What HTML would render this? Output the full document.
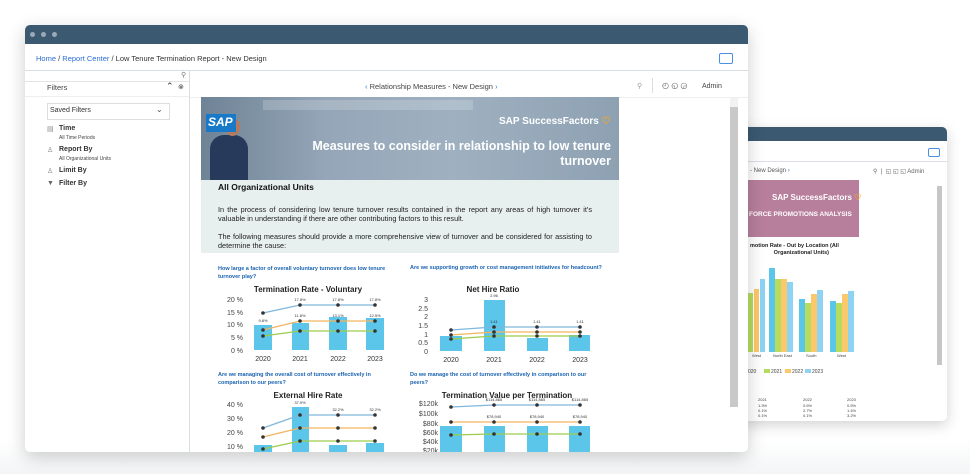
<!DOCTYPE html>
<html><head><meta charset="utf-8"><style>
*{margin:0;padding:0;box-sizing:border-box}
body{width:970px;height:474px;background:#fff;position:relative;overflow:hidden;font-family:"Liberation Sans",Arial,sans-serif;color:#333}
.a{position:absolute}
.t{position:absolute;white-space:nowrap}
</style></head><body>
<div class="a" style="left:0;top:440px;width:970px;height:34px;background:linear-gradient(#fff,#f3f5f6)"></div>
<!-- second window -->
<div class="a" style="left:740px;top:127px;width:207px;height:294px;background:#fff;border-radius:5px;box-shadow:0 4px 14px rgba(0,0,0,.18);overflow:hidden">
 <div class="a" style="left:0;top:0;width:207px;height:14px;background:#3b5a72"></div>
 <div class="a" style="left:0;top:34px;width:207px;height:1px;background:#dde"></div>
 <div class="a" style="left:188px;top:21px;width:12px;height:9px;border:1.5px solid #4a90e2;border-radius:2px"></div>
 <div class="t" style="left:10px;top:41px;font-size:6px;color:#555">- New Design <span style="color:#2a6fd6">›</span></div>
 <div class="t" style="left:133px;top:41px;font-size:6px;color:#666">⚲ &nbsp;|&nbsp; ◱ ◱ ◱ Admin</div>
 <div class="a" style="left:8px;top:53px;width:111px;height:57px;background:#b87f9c"></div>
 <div class="t" style="left:32px;top:66px;font-size:8px;font-weight:bold;color:#fff">SAP SuccessFactors <span style="color:#f5a623">♡</span></div>
 <div class="t" style="left:9px;top:84px;font-size:6.5px;font-weight:bold;color:#fff">FORCE PROMOTIONS ANALYSIS</div>
 <div class="t" style="left:10px;top:116px;font-size:5.5px;font-weight:bold;color:#222;text-align:center;line-height:7px">motion Rate - Out by Location (All<br>&nbsp;&nbsp;&nbsp;&nbsp;&nbsp;&nbsp;&nbsp;&nbsp;&nbsp;Organizational Units)</div>
 <svg class="a" style="left:0;top:0" width="207" height="294">
  <g>
   <rect x="8" y="166" width="5" height="59" fill="#b5dc5f"/><rect x="14" y="162" width="5" height="63" fill="#fbc96b"/><rect x="20" y="152" width="5" height="73" fill="#8fd3f4"/>
   <rect x="29" y="141" width="6" height="84" fill="#5bc5ea"/><rect x="35" y="152" width="6" height="73" fill="#b5dc5f"/><rect x="41" y="152" width="6" height="73" fill="#fbc96b"/><rect x="47" y="155" width="6" height="70" fill="#8fd3f4"/>
   <rect x="59" y="172" width="6" height="53" fill="#5bc5ea"/><rect x="65" y="176" width="6" height="49" fill="#b5dc5f"/><rect x="71" y="167" width="6" height="58" fill="#fbc96b"/><rect x="77" y="163" width="6" height="62" fill="#8fd3f4"/>
   <rect x="90" y="174" width="6" height="51" fill="#5bc5ea"/><rect x="96" y="176" width="6" height="49" fill="#b5dc5f"/><rect x="102" y="167" width="6" height="58" fill="#fbc96b"/><rect x="108" y="164" width="6" height="61" fill="#8fd3f4"/>
  </g>
  <g font-size="4" fill="#444" font-family="Liberation Sans">
   <text x="12" y="230">West</text><text x="33" y="230">North East</text><text x="66" y="230">South</text><text x="97" y="230">West</text>
   <rect x="24" y="242" width="6" height="4" fill="#b5dc5f"/><rect x="45" y="242" width="6" height="4" fill="#fbc96b"/><rect x="65" y="242" width="6" height="4" fill="#8fd3f4"/>
   <text x="8" y="246" font-size="5">020</text><text x="31" y="246" font-size="5">2021</text><text x="52" y="246" font-size="5">2022</text><text x="72" y="246" font-size="5">2023</text>
   <text x="18" y="274">2021</text><text x="63" y="274">2022</text><text x="107" y="274">2023</text>
   <text x="18" y="280">1.3%</text><text x="63" y="280">0.6%</text><text x="107" y="280">0.5%</text>
   <text x="18" y="285">0.1%</text><text x="63" y="285">2.7%</text><text x="107" y="285">1.4%</text>
   <text x="18" y="290">0.1%</text><text x="63" y="290">0.1%</text><text x="107" y="290">3.2%</text>
  </g>
  <rect x="197" y="59" width="5" height="179" fill="#c6c6c6"/>
 </svg>
</div>
<!-- main window -->
<div class="a" style="left:25px;top:25px;width:723px;height:427px;background:#fff;border-radius:5px;box-shadow:0 5px 18px rgba(0,0,0,.2);overflow:hidden">
 <div class="a" style="left:0;top:0;width:723px;height:19px;background:#3b5a72"></div>
 <div class="a" style="left:5px;top:7px;width:5px;height:5px;border-radius:50%;background:#9aaab8"></div>
 <div class="a" style="left:16px;top:7px;width:5px;height:5px;border-radius:50%;background:#9aaab8"></div>
 <div class="a" style="left:27px;top:7px;width:5px;height:5px;border-radius:50%;background:#9aaab8"></div>
 <div class="t" style="left:11px;top:29px;font-size:7.5px;color:#333"><span style="color:#2a6fd6">Home</span> / <span style="color:#2a6fd6">Report Center</span> / Low Tenure Termination Report - New Design</div>
 <div class="a" style="left:694px;top:28px;width:14px;height:11px;border:1.5px solid #4a90e2;border-radius:2px"></div>
 <div class="a" style="left:0;top:45px;width:723px;height:1px;background:#d8dde2"></div>
 <!-- left panel -->
 <div class="a" style="left:164px;top:45px;width:1px;height:382px;background:#d8dde2"></div>
 <div class="a" style="left:0;top:56px;width:164px;height:1px;background:#e4e4e4"></div>
 <div class="t" style="left:156px;top:46px;font-size:7px;color:#777">⚲</div>
 <div class="t" style="left:22px;top:58px;font-size:7.5px;color:#444">Filters</div>
 <div class="t" style="left:141px;top:56px;font-size:9px;color:#333">⌃</div>
 <div class="t" style="left:153px;top:58px;font-size:7px;color:#444">⊗</div>
 <div class="a" style="left:0;top:71px;width:164px;height:1px;background:#eee"></div>
 <div class="a" style="left:22px;top:78px;width:123px;height:17px;border:1px solid #ddd"></div>
 <div class="t" style="left:25px;top:82px;font-size:7px;color:#333">Saved Filters</div>
 <div class="t" style="left:131px;top:80px;font-size:8px;color:#555">⌄</div>
 <div class="t" style="left:22px;top:100px;font-size:7px;color:#888">▤</div>
 <div class="t" style="left:34px;top:100px;font-size:7px;font-weight:bold;color:#333">Time</div>
 <div class="t" style="left:34px;top:110px;font-size:5px;color:#444">All Time Periods</div>
 <div class="t" style="left:22px;top:121px;font-size:7px;color:#888">♙</div>
 <div class="t" style="left:34px;top:121px;font-size:7px;font-weight:bold;color:#333">Report By</div>
 <div class="t" style="left:34px;top:131px;font-size:5px;color:#444">All Organizational Units</div>
 <div class="t" style="left:22px;top:142px;font-size:7px;color:#888">♙</div>
 <div class="t" style="left:34px;top:142px;font-size:7px;font-weight:bold;color:#333">Limit By</div>
 <div class="t" style="left:22px;top:155px;font-size:7px;color:#666">▼</div>
 <div class="t" style="left:34px;top:155px;font-size:7px;font-weight:bold;color:#333">Filter By</div>
 <!-- header -->
 <div class="a" style="left:165px;top:72px;width:558px;height:1px;background:#eee"></div>
 <div class="t" style="left:340px;top:57px;font-size:7.5px;color:#444"><span style="color:#2a6fd6">‹</span> Relationship Measures - New Design <span style="color:#2a6fd6">›</span></div>
 <div class="t" style="left:612px;top:57px;font-size:7px;color:#999">⚲</div>
 <div class="a" style="left:627px;top:53px;width:1px;height:15px;background:#ddd"></div>
 <div class="t" style="left:637px;top:56px;font-size:8px;color:#666">◴ ◵ ◶</div>
 <div class="t" style="left:677px;top:58px;font-size:7px;color:#444">Admin</div>
 <div class="a" style="left:705px;top:82px;width:8px;height:300px;background:#c9c9c9"></div>
 <div class="a" style="left:705px;top:73px;width:8px;height:9px;background:#f2f2f2"></div>
 <!-- banner -->
 <div class="a" style="left:176px;top:72px;width:418px;height:83px;background:linear-gradient(90deg,#6f8396 0%,#94a6b7 30%,#9fb1c1 60%,#8ea1b2 100%)"></div>
 <div class="a" style="left:238px;top:75px;width:210px;height:10px;background:rgba(255,255,255,.18)"></div>
 <div class="a" style="left:185px;top:110px;width:38px;height:45px;background:#283a5c;border-radius:14px 14px 0 0"></div>
 <div class="a" style="left:200px;top:93px;width:15px;height:18px;background:#b27a5e;border-radius:50%"></div>
 <div class="a" style="left:181px;top:89px;width:30px;height:18px;background:#1779c7"></div>
 <div class="t" style="left:183px;top:90px;font-size:12px;font-weight:bold;color:#fff;font-style:italic">SAP</div>
 <div class="t" style="left:474px;top:91px;font-size:10px;font-weight:bold;color:#fff">SAP SuccessFactors <span style="color:#f5a623">♡</span></div>
 <div class="t" style="left:266px;top:114px;font-size:12.5px;font-weight:bold;color:#fff;text-align:right;line-height:15px;width:320px">Measures to consider in relationship to low tenure<br>turnover</div>
 <div class="a" style="left:176px;top:155px;width:418px;height:73px;background:#e8efef"></div>
 <div class="t" style="left:193px;top:157px;font-size:8.5px;font-weight:bold;color:#111">All Organizational Units</div>
 <div class="a" style="left:193px;top:180px;width:374px;font-size:7.3px;line-height:9px;color:#222;text-align:justify">In the process of considering low tenure turnover results contained in the report any areas of high turnover it's valuable in understanding if there are other contributing factors to this result.<br><br>The following measures should provide a more comprehensive view of turnover and be considered for assisting to determine the cause:</div>
 <div class="a" style="left:193px;top:240px;width:190px;font-size:5.5px;line-height:8px;color:#1a63b0;font-weight:bold">How large a factor of overall voluntary turnover does low tenure turnover play?</div>
 <div class="t" style="left:385px;top:240px;font-size:5.5px;color:#1a63b0;font-weight:bold">Are we supporting growth or cost management initiatives for headcount?</div>
 <div class="a" style="left:193px;top:346px;width:160px;font-size:5.5px;line-height:8px;color:#1a63b0;font-weight:bold">Are we managing the overall cost of turnover effectively in comparison to our peers?</div>
 <div class="a" style="left:385px;top:346px;width:185px;font-size:5.5px;line-height:8px;color:#1a63b0;font-weight:bold">Do we manage the cost of turnover effectively in comparison to our peers?</div>
</div>
<!-- charts in page coords -->
<svg class="a" style="left:0;top:0" width="970" height="452" font-family="Liberation Sans">
 <defs><clipPath id="c"><rect x="25" y="25" width="723" height="427"/></clipPath></defs>
 <g clip-path="url(#c)">
 <text x="308" y="292" font-size="8" font-weight="bold" text-anchor="middle" fill="#222">Termination Rate - Voluntary</text>
 <g font-size="7" fill="#444" text-anchor="end"><text x="243" y="302">20 %</text><text x="243" y="315">15 %</text><text x="243" y="327">10 %</text><text x="243" y="340">5 %</text><text x="243" y="353">0 %</text></g>
 <g fill="#5bc5ea"><rect x="254" y="325" width="18" height="25"/><rect x="292" y="323" width="17" height="27"/><rect x="329" y="317" width="18" height="33"/><rect x="366" y="318" width="18" height="32"/></g>
 <polyline points="263,313 300,305 338,305 375,305" fill="none" stroke="#7fb7dc" stroke-width="1.3"/>
 <polyline points="263,330 300,321 338,321 375,321" fill="none" stroke="#f2b45f" stroke-width="1.3"/>
 <polyline points="263,336 300,331 338,331 375,331" fill="none" stroke="#9ccc4a" stroke-width="1.3"/>
 <g font-size="7" fill="#333" text-anchor="middle"><text x="263" y="361">2020</text><text x="300" y="361">2021</text><text x="338" y="361">2022</text><text x="375" y="361">2023</text></g>
 <text x="493" y="292" font-size="8" font-weight="bold" text-anchor="middle" fill="#222">Net Hire Ratio</text>
 <g font-size="7" fill="#444" text-anchor="end"><text x="428" y="302">3</text><text x="428" y="311">2.5</text><text x="428" y="319">2</text><text x="428" y="328">1.5</text><text x="428" y="337">1</text><text x="428" y="345">0.5</text><text x="428" y="354">0</text></g>
 <g fill="#5bc5ea"><rect x="440" y="336" width="22" height="15"/><rect x="484" y="300" width="21" height="51"/><rect x="527" y="338" width="21" height="13"/><rect x="569" y="335" width="21" height="16"/></g>
 <polyline points="451,330 494,327 537,327 580,327" fill="none" stroke="#7fb7dc" stroke-width="1.3"/>
 <polyline points="451,335 494,332 537,332 580,332" fill="none" stroke="#f2b45f" stroke-width="1.3"/>
 <polyline points="451,339 494,336 537,336 580,336" fill="none" stroke="#9ccc4a" stroke-width="1.3"/>
 <g font-size="7" fill="#333" text-anchor="middle"><text x="451" y="362">2020</text><text x="494" y="362">2021</text><text x="537" y="362">2022</text><text x="580" y="362">2023</text></g>
 <text x="308" y="398" font-size="8" font-weight="bold" text-anchor="middle" fill="#222">External Hire Rate</text>
 <g font-size="7" fill="#444" text-anchor="end"><text x="243" y="407">40 %</text><text x="243" y="421">30 %</text><text x="243" y="435">20 %</text><text x="243" y="449">10 %</text></g>
 <g fill="#5bc5ea"><rect x="254" y="445" width="18" height="20"/><rect x="292" y="407" width="17" height="50"/><rect x="329" y="445" width="18" height="20"/><rect x="366" y="443" width="18" height="20"/></g>
 <polyline points="263,428 300,415 338,415 375,415" fill="none" stroke="#7fb7dc" stroke-width="1.3"/>
 <polyline points="263,437 300,428 338,428 375,428" fill="none" stroke="#f2b45f" stroke-width="1.3"/>
 <polyline points="263,449 300,441 338,441 375,441" fill="none" stroke="#9ccc4a" stroke-width="1.3"/>
 <text x="507" y="398" font-size="8" font-weight="bold" text-anchor="middle" fill="#222">Termination Value per Termination</text>
 <g font-size="7" fill="#444" text-anchor="end"><text x="438" y="406">$120k</text><text x="438" y="416">$100k</text><text x="438" y="426">$80k</text><text x="438" y="435">$60k</text><text x="438" y="444">$40k</text><text x="438" y="453">$20k</text></g>
 <g fill="#5bc5ea"><rect x="440" y="426" width="22" height="30"/><rect x="484" y="426" width="21" height="30"/><rect x="527" y="426" width="21" height="30"/><rect x="569" y="426" width="21" height="30"/></g>
 <polyline points="451,407 494,405 537,405 580,405" fill="none" stroke="#7fb7dc" stroke-width="1.3"/>
 <polyline points="451,422 494,422 537,422 580,422" fill="none" stroke="#f2b45f" stroke-width="1.3"/>
 <polyline points="451,435 494,434 537,434 580,434" fill="none" stroke="#9ccc4a" stroke-width="1.3"/>
 <g fill="#333">
  <circle cx="263" cy="313" r="1.8"/><circle cx="300" cy="305" r="1.8"/><circle cx="338" cy="305" r="1.8"/><circle cx="375" cy="305" r="1.8"/>
  <circle cx="263" cy="330" r="1.8"/><circle cx="300" cy="321" r="1.8"/><circle cx="338" cy="321" r="1.8"/><circle cx="375" cy="321" r="1.8"/>
  <circle cx="263" cy="336" r="1.8"/><circle cx="300" cy="331" r="1.8"/><circle cx="338" cy="331" r="1.8"/><circle cx="375" cy="331" r="1.8"/>
  <circle cx="451" cy="330" r="1.8"/><circle cx="494" cy="327" r="1.8"/><circle cx="537" cy="327" r="1.8"/><circle cx="580" cy="327" r="1.8"/>
  <circle cx="451" cy="335" r="1.8"/><circle cx="494" cy="332" r="1.8"/><circle cx="537" cy="332" r="1.8"/><circle cx="580" cy="332" r="1.8"/>
  <circle cx="451" cy="339" r="1.8"/><circle cx="494" cy="336" r="1.8"/><circle cx="537" cy="336" r="1.8"/><circle cx="580" cy="336" r="1.8"/>
  <circle cx="263" cy="428" r="1.8"/><circle cx="300" cy="415" r="1.8"/><circle cx="338" cy="415" r="1.8"/><circle cx="375" cy="415" r="1.8"/>
  <circle cx="263" cy="437" r="1.8"/><circle cx="300" cy="428" r="1.8"/><circle cx="338" cy="428" r="1.8"/><circle cx="375" cy="428" r="1.8"/>
  <circle cx="263" cy="449" r="1.8"/><circle cx="300" cy="441" r="1.8"/><circle cx="338" cy="441" r="1.8"/><circle cx="375" cy="441" r="1.8"/>
  <circle cx="451" cy="407" r="1.8"/><circle cx="494" cy="405" r="1.8"/><circle cx="537" cy="405" r="1.8"/><circle cx="580" cy="405" r="1.8"/>
  <circle cx="451" cy="422" r="1.8"/><circle cx="494" cy="422" r="1.8"/><circle cx="537" cy="422" r="1.8"/><circle cx="580" cy="422" r="1.8"/>
  <circle cx="451" cy="435" r="1.8"/><circle cx="494" cy="434" r="1.8"/><circle cx="537" cy="434" r="1.8"/><circle cx="580" cy="434" r="1.8"/>
 </g>
 <g font-size="4" fill="#333" text-anchor="middle">
  <text x="300" y="301">17.8%</text><text x="338" y="301">17.8%</text><text x="375" y="301">17.8%</text>
  <text x="300" y="317">11.8%</text><text x="338" y="317">13.1%</text><text x="375" y="317">12.5%</text><text x="263" y="322">9.8%</text>
  <text x="494" y="297">2.96</text><text x="494" y="323">1.41</text><text x="537" y="323">1.41</text><text x="580" y="323">1.41</text>
  <text x="300" y="404">37.9%</text><text x="338" y="411">32.2%</text><text x="375" y="411">32.2%</text>
  <text x="494" y="401">$114,865</text><text x="537" y="401">$114,865</text><text x="580" y="401">$114,865</text><text x="494" y="418">$78,940</text><text x="537" y="418">$78,940</text><text x="580" y="418">$78,940</text>
 </g>
 </g>
</svg>
</body></html>
